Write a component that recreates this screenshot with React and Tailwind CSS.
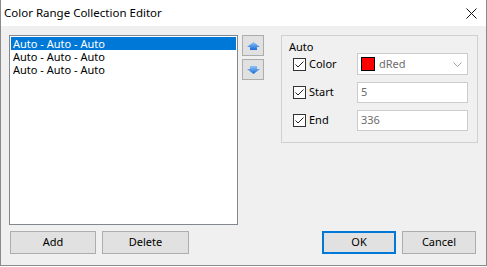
import { useState } from "react";

const font = { fontFamily: '"Noto Sans", "Open Sans", sans-serif' };

function ArrowButton({ down }) {
  const id = down ? "gd" : "gu";
  return (
    <button className="w-[22px] h-[21px] bg-[#e1e1e1] border border-[#adadad] flex items-center justify-center">
      <svg width="13" height="8" viewBox="0 0 13 8" className={down ? "rotate-180" : ""}>
        <defs>
          <linearGradient id={id} x1="0" y1="0" x2="0" y2="1">
            <stop offset="0" stopColor={down ? "#1a6cd6" : "#8fc4f7"} />
            <stop offset="1" stopColor={down ? "#8fc4f7" : "#1a6cd6"} />
          </linearGradient>
        </defs>
        <polygon points="6.5,0 13,5 10,5 10,8 3,8 3,5 0,5" fill={`url(#${id})`} />
      </svg>
    </button>
  );
}

function CheckBox({ label }) {
  return (
    <div className="flex items-center h-[22px]">
      <div className="w-[13px] h-[13px] border border-[#333] bg-white flex items-center justify-center">
        <svg width="11" height="11" viewBox="0 0 11 11">
          <path d="M1.5 5.5 L4 8 L9.5 2.5" stroke="#222" strokeWidth="1" fill="none" />
        </svg>
      </div>
      <span className="ml-[3px] text-[11px] text-black">{label}</span>
    </div>
  );
}

function Field({ children, combo }) {
  return (
    <div
      className={`w-[111px] ${combo ? "h-[22px]" : "h-[21px]"} bg-white border border-[#cccccc] flex items-center px-[3px] text-[11px] text-[#6d6d6d]`}
    >
      {children}
    </div>
  );
}

export default function App() {
  const [items] = useState(["Auto - Auto - Auto", "Auto - Auto - Auto", "Auto - Auto - Auto"]);
  const [selected, setSelected] = useState(0);

  return (
    <div className="w-[487px] h-[267px] bg-white" style={font}>
      <div className="w-[487px] h-[266px] bg-[#f0f0f0] border-x border-b border-[#8a8a8a] flex flex-col">
        {/* Title bar */}
        <div className="h-[26px] bg-white flex items-center justify-between pl-[3px] pr-[9px]">
          <span className="text-[11.5px] text-black">Color Range Collection Editor</span>
          <svg width="11" height="11" viewBox="0 0 11 11">
            <path d="M0.5 0.5 L10.5 10.5 M10.5 0.5 L0.5 10.5" stroke="#111" strokeWidth="1" />
          </svg>
        </div>

        {/* Body */}
        <div className="flex pt-[9px] pl-[8px]">
          <div className="w-[229px] h-[190px] bg-white border border-[#828790] p-[1px] flex flex-col">
            {items.map((item, i) => (
              <div
                key={i}
                onClick={() => setSelected(i)}
                className={`h-[13px] leading-[13px] pl-[2px] text-[11px] overflow-hidden ${
                  i === selected ? "bg-[#0078d7] text-white" : "text-black"
                }`}
              >
                {item}
              </div>
            ))}
          </div>

          <div className="ml-[4px] flex flex-col gap-[3px]">
            <ArrowButton />
            <ArrowButton down />
          </div>

          <div className="ml-[17px] w-[197px] h-[108px] border border-[#d0d0d0] pl-[11px] pt-[3px]">
            <div className="text-[11px] text-black -ml-[4px] h-[16px] leading-[16px]">Auto</div>
            <div className="flex flex-col gap-[6px] mt-[-2px]">
              <div className="flex items-center justify-between pr-[9px]">
                <CheckBox label="Color" />
                <Field combo>
                  <div className="w-[14px] h-[14px] bg-[#ff0000] border border-black" />
                  <span className="ml-[4px] flex-1">dRed</span>
                  <svg width="9" height="5" viewBox="0 0 9 5" className="mr-[2px]">
                    <path d="M0.5 0.5 L4.5 4.5 L8.5 0.5" stroke="#a0a0a0" fill="none" />
                  </svg>
                </Field>
              </div>
              <div className="flex items-center justify-between pr-[9px]">
                <CheckBox label="Start" />
                <Field>5</Field>
              </div>
              <div className="flex items-center justify-between pr-[9px]">
                <CheckBox label="End" />
                <Field>336</Field>
              </div>
            </div>
          </div>
        </div>

        {/* Bottom buttons */}
        <div className="flex mt-[6px] pl-[9px] text-[11px] text-black">
          <button className="w-[86px] h-[23px] bg-[#e1e1e1] border border-[#adadad]">Add</button>
          <button className="ml-[6px] w-[87px] h-[23px] bg-[#e1e1e1] border border-[#adadad]">Delete</button>
          <button className="ml-[133px] w-[74px] h-[23px] bg-[#e1e1e1] border-2 border-[#0078d7]">OK</button>
          <button className="ml-[6px] w-[74px] h-[23px] bg-[#e1e1e1] border border-[#adadad]">Cancel</button>
        </div>
      </div>
    </div>
  );
}
